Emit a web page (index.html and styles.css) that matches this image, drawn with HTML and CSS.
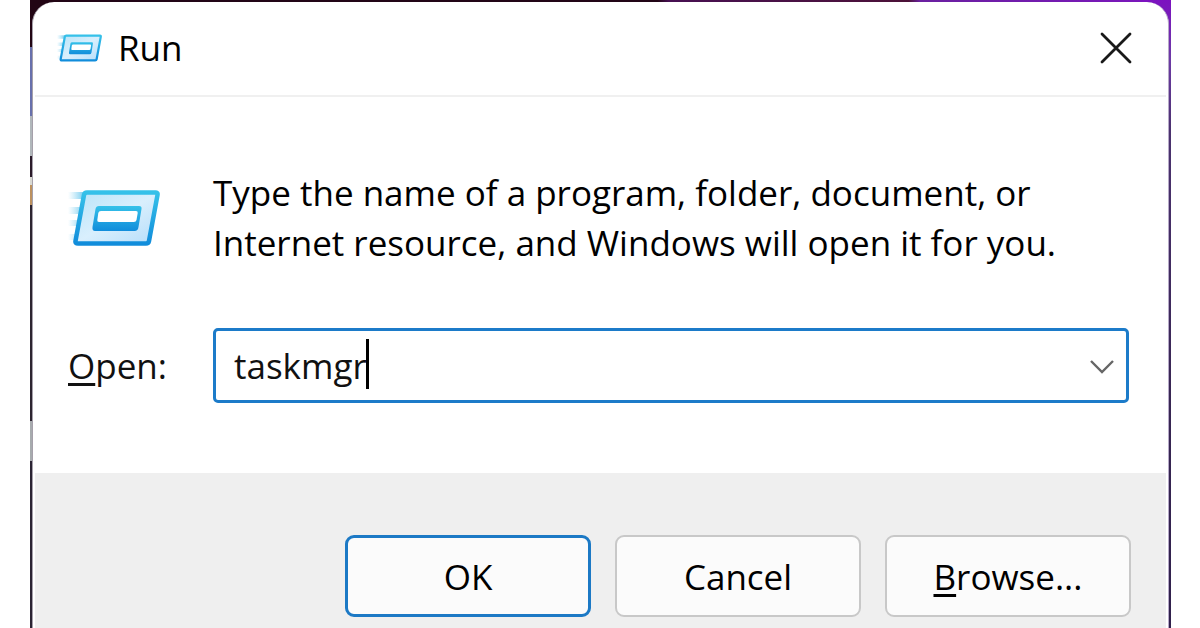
FILE: index.html
```html
<!DOCTYPE html>
<html lang="en">
<head>
<meta charset="utf-8">
<meta name="viewport" content="width=device-width, initial-scale=1">
<title>Run</title>
<link rel="stylesheet" href="styles.css">
</head>
<body>
<svg class="defs" width="0" height="0" aria-hidden="true">
  <defs>
    <linearGradient id="edge" x1="0" y1="0" x2="0" y2="1"><stop offset="0" stop-color="#35c1e9"/><stop offset="1" stop-color="#118ddb"/></linearGradient>
    <linearGradient id="face" x1="0" y1="0" x2="1" y2="1"><stop offset="0" stop-color="#b9e4f8"/><stop offset=".5" stop-color="#d9effd"/><stop offset="1" stop-color="#b5ddfa"/></linearGradient>
    <linearGradient id="trail" x1="0" y1="0" x2="1" y2="0"><stop offset="0" stop-color="#8fd6f2" stop-opacity="0"/><stop offset="1" stop-color="#5fc3ec"/></linearGradient>
    <symbol id="run-icon" viewBox="0 0 92 58">
      <g fill="url(#trail)">
        <path d="M0 3h18v7H0zM0 18h15v7H0zM0 31h13v6H0zM0 45h10v6H0z"/>
      </g>
      <path d="M19 3.500h69q2 0 1.500 2.500l-8.500 46q-.5 2.500-3 2.500H10q-3 0-2.500-2.500l8.500-46q.5-2.500 3-2.500z" fill="url(#face)" stroke="url(#edge)" stroke-width="4.500"/>
      <path d="M31 17h40q3 0 2.500 3l-3 18q-.5 4-4 4H27q-3 0-2.500-4l3-18q.5-3 3.500-3z" fill="url(#edge)"/>
      <path d="M33 22h35q2 0 1.700 2l-1.200 7q-.3 2-2.700 2H31q-2 0-1.700-2l1-7q.3-2 2.700-2z" fill="#fff"/>
    </symbol>
  </defs>
</svg>
<div class="desktop">
  <main class="dialog" role="dialog" aria-labelledby="title">
    <header class="titlebar">
      <svg class="title-icon" aria-hidden="true"><use href="#run-icon"/></svg>
      <h1 class="title" id="title">Run</h1>
      <button class="close" type="button" aria-label="Close">
        <svg width="32" height="32" viewBox="0 0 32 32" aria-hidden="true"><path d="M2 2l28 28M30 2L2 30" stroke="#191919" stroke-width="2.800" stroke-linecap="round"/></svg>
      </button>
    </header>
    <form class="form">
      <div class="content">
        <svg class="run-icon" aria-hidden="true"><use href="#run-icon"/></svg>
        <p class="message">Type the name of a program, folder, document, or Internet resource, and Windows will open it for you.</p>
        <label class="label" for="command"><u>O</u>pen:</label>
        <div class="combo">
          <input class="command" id="command" type="text" value="taskmgr" autocomplete="off" spellcheck="false">
          <span class="caret"></span>
          <button class="drop" type="button" aria-label="Show recent commands">
            <svg width="26" height="16" viewBox="0 0 26 16" fill="none" aria-hidden="true"><path d="M2 3l11 11L24 3" stroke="#666" stroke-width="2.400"/></svg>
          </button>
        </div>
      </div>
      <footer class="actions">
        <button class="button primary" type="submit">OK</button>
        <button class="button" type="button">Cancel</button>
        <button class="button" type="button"><span><u>B</u>rowse...</span></button>
      </footer>
    </form>
  </main>
</div>
</body>
</html>
```
FILE: styles.css
```css
* { box-sizing: border-box; }

body {
  margin: 0;
  background: #fff;
  color: #000;
  font: 35px/50px "Open Sans", "Noto Sans", sans-serif;
}

.defs { position: absolute; }

.desktop {
  display: flex;
  min-height: 100vh;
  margin: 0 29px 0 30px;
  padding: 2px 2px 0 2px;
  background:
    linear-gradient(#220514 0 47px, #6870ac 47px 116px, #b1b7bb 116px 156px, #2b1b2a 156px 177px, #d9d9d3 177px 185px, #bc915f 185px 205px, #2c2430 205px 421px, #a7abae 421px 461px, #2b2433 461px) left / 30px 100% no-repeat,
    linear-gradient(#7c12c0 0, #6c3aa5 60px, #4b326f 130px, #382653 400px, #30204c) right / 30px 100% no-repeat,
    linear-gradient(90deg, #220516 0 55%, #471052 56%, #4c1238 77%, #6a20a0 78%, #7c16be) #220516;
}

.dialog {
  display: flex;
  flex: 1;
  flex-direction: column;
  padding: 0 2px;
  border-radius: 22px 22px 0 0;
  border-left: 1px solid #a5a0aa;
  border-right: 1px solid #b6a9c8;
  background: #fff;
}

.titlebar {
  display: flex;
  align-items: center;
  gap: 16px;
  height: 95px;
  padding: 0 34px 2px 22px;
  border-bottom: 2px solid #f0f0f0;
}

.title-icon { width: 45px; height: 30px; }

.title {
  flex: 1;
  margin: 0;
  font-size: 35px;
  font-weight: 400;
}

.close, .drop {
  display: flex;
  padding: 0;
  border: 0;
  background: none;
}

.form {
  display: flex;
  flex: 1;
  flex-direction: column;
}

.content {
  display: grid;
  grid-template-columns: 145px 1fr;
  row-gap: 60px;
  align-items: center;
  padding: 71px 37px 70px 33px;
}

.run-icon { width: 92px; height: 58px; }

.message { margin: 0; }

.label { color: #111; }

u {
  text-decoration-thickness: 3px;
  text-underline-offset: 4px;
  text-decoration-skip-ink: none;
}

.combo {
  display: flex;
  position: relative;
  align-items: center;
  height: 75px;
  padding: 0 11px 0 18px;
  border: 3px solid #1c7bc9;
  border-radius: 5px;
}

.command {
  flex: 1;
  min-width: 0;
  padding: 0;
  border: 0;
  outline: 0;
  background: none;
  color: #111;
  font: inherit;
}

.caret {
  position: absolute;
  top: 8px;
  left: 150px;
  width: 3px;
  height: 50px;
  background: #000;
}

.actions {
  display: flex;
  flex: 1;
  flex-wrap: wrap;
  justify-content: flex-end;
  align-items: flex-start;
  gap: 24px;
  padding: 62px 35px 11px;
  background: #efefef;
}

.button {
  width: 246px;
  height: 82px;
  padding: 2px 0 0;
  border: 2px solid #c8c8c8;
  border-radius: 9px;
  background: #fbfbfb;
  color: #000;
  font: inherit;
}

.primary { border: 3px solid #1c79c5; }
```
